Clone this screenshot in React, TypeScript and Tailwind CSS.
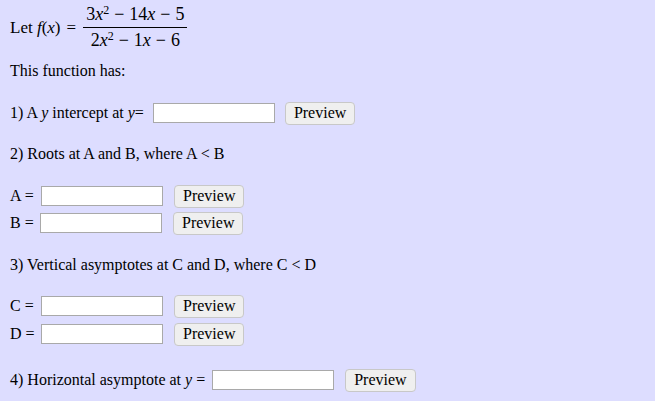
import React from 'react';

const serif = { fontFamily: '"Liberation Serif", "DejaVu Serif", serif' };

const Field = ({ className = '' }: { className?: string }) => (
  <input type="text" className={`h-[20px] w-[122px] border border-[#a9a9a9] bg-white px-1 outline-none ${className}`} />
);

const PreviewBtn = ({ className = '' }: { className?: string }) => (
  <button className={`h-[23px] px-[8px] rounded-[4px] border border-[#c8c8c8] bg-[#efefef] text-[16px] leading-none text-black ${className}`} style={serif}>
    Preview
  </button>
);

const Y = () => <i>y</i>;
const M = () => <span className="mx-[5px]">−</span>;

export default function App() {
  return (
    <div className="w-[655px] h-[401px] bg-[#ddddff] text-black text-[16px] overflow-hidden" style={serif}>
      {/* header with fraction */}
      <div className="flex items-center pl-[10px] pt-[3px] h-[52px] text-[17px]">
        <span>Let <i>f</i>(<i>x</i>)<span className="ml-[6px]">=</span></span>
        <span className="inline-flex flex-col items-center ml-[7px] leading-[23px] text-[18px]">
          <span className="px-[3px] border-b border-black pb-[1px]">3<i>x</i><sup className="text-[12px]">2</sup><M />14<i>x</i><M />5</span>
          <span className="px-[3px] pt-[1px]">2<i>x</i><sup className="text-[12px]">2</sup><M />1<i>x</i><M />6</span>
        </span>
      </div>

      <div className="pl-[10px] mt-[9px] h-[20px] leading-[20px]">This function has:</div>

      <div className="flex items-center pl-[10px] mt-[20px] h-[24px]">
        <span>1) A <Y /> intercept at <Y />=</span>
        <Field className="ml-[9px]" />
        <PreviewBtn className="ml-[10px]" />
      </div>

      <div className="pl-[10px] mt-[19px] h-[20px] leading-[20px]">2) Roots at A and B, where A &lt; B</div>

      <div className="flex items-center pl-[10px] mt-[20px] h-[24px]">
        <span className="w-[31px]">A =</span>
        <Field />
        <PreviewBtn className="ml-[11px]" />
      </div>
      <div className="flex items-center pl-[10px] mt-[3px] h-[24px]">
        <span className="w-[30px]">B =</span>
        <Field />
        <PreviewBtn className="ml-[11px]" />
      </div>

      <div className="pl-[10px] mt-[20px] h-[20px] leading-[20px]">3) Vertical asymptotes at C and D, where C &lt; D</div>

      <div className="flex items-center pl-[10px] mt-[19px] h-[24px]">
        <span className="w-[31px]">C =</span>
        <Field />
        <PreviewBtn className="ml-[11px]" />
      </div>
      <div className="flex items-center pl-[10px] mt-[4px] h-[24px]">
        <span className="w-[31px]">D =</span>
        <Field />
        <PreviewBtn className="ml-[11px]" />
      </div>

      <div className="flex items-center pl-[10px] mt-[22px] h-[24px]">
        <span>4) Horizontal asymptote at <Y /> =</span>
        <Field className="ml-[7px]" />
        <PreviewBtn className="ml-[11px]" />
      </div>
    </div>
  );
}
